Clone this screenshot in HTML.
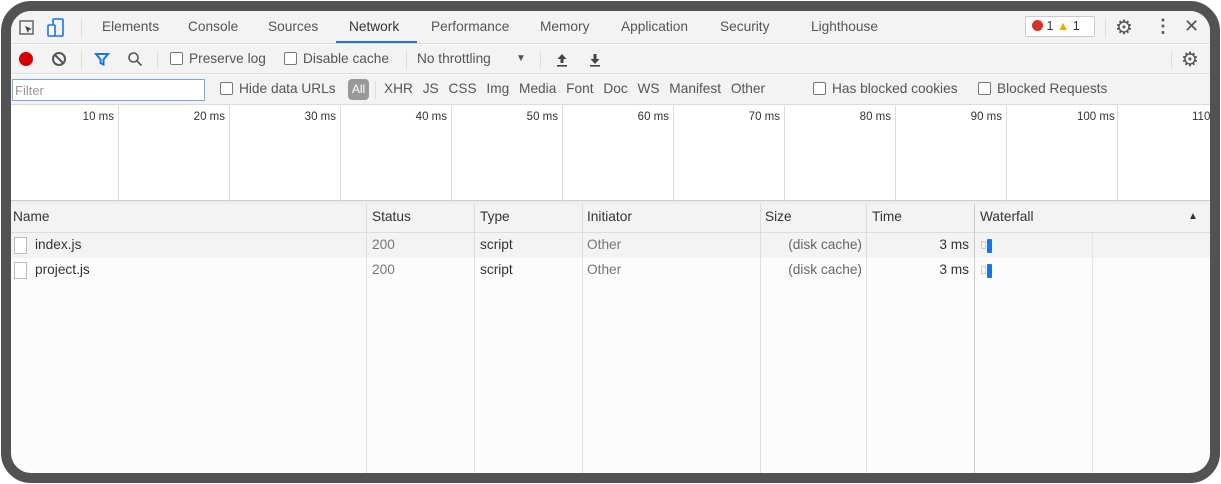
<!DOCTYPE html>
<html><head><style>
*{margin:0;padding:0;box-sizing:border-box}
body{width:1221px;height:484px;background:#fff;font-family:"Liberation Sans",Arial,sans-serif;font-size:13.7px;color:#333;position:relative;overflow:hidden}
#frame{position:absolute;left:1px;top:1px;width:1219px;height:482px;border:10px solid #525252;border-radius:30px;background:#fcfcfc;overflow:hidden}
.a{position:absolute;white-space:nowrap}
.g{color:#555}
.cb{display:inline-block;width:13px;height:13px;border:1px solid #777;border-radius:2px;background:#fff;vertical-align:-2px;margin-right:6px}
.vl{position:absolute;width:1px;background:#ddd}
.r{text-align:right;width:100px}
</style></head><body>
<div id="frame">
<div class="a" style="left:0;top:0;width:1199px;height:33px;background:#f3f3f3;border-bottom:1px solid #ddd"></div>
<svg class="a" style="left:8px;top:9px" width="16" height="16"><rect x="1" y="1" width="13" height="13" fill="none" stroke="#666" stroke-width="1.5"/><path d="M6 6l7 3-3 1-1 3z" fill="#444"/></svg>
<svg class="a" style="left:36px;top:7px" width="18" height="20"><rect x="6" y="1" width="10" height="17" rx="1" fill="none" stroke="#1a73e8" stroke-width="1.6"/><rect x="1" y="7" width="7" height="11" rx="1" fill="#fff" stroke="#1a73e8" stroke-width="1.6"/></svg>
<div class="vl" style="left:70px;top:8px;height:18px"></div>
<div class="a g" style="left:91px;top:8px">Elements</div>
<div class="a g" style="left:177px;top:8px">Console</div>
<div class="a g" style="left:257px;top:8px">Sources</div>
<div class="a" style="left:338px;top:8px;color:#333">Network</div>
<div class="a" style="left:325px;top:30px;width:81px;height:2px;background:#1a73e8"></div>
<div class="a g" style="left:420px;top:8px">Performance</div>
<div class="a g" style="left:529px;top:8px">Memory</div>
<div class="a g" style="left:610px;top:8px">Application</div>
<div class="a g" style="left:709px;top:8px">Security</div>
<div class="a g" style="left:800px;top:8px">Lighthouse</div>
<div class="a" style="left:1014px;top:5px;width:70px;height:21px;border:1px solid #ccc;border-radius:2px;background:#fff;font-size:12.5px;padding:2px 0 0 6px"><span style="display:inline-block;width:11px;height:11px;border-radius:50%;background:#d93025;vertical-align:-1px"></span> 1 <span style="color:#f2a600">▲</span> 1</div>
<div class="vl" style="left:1094px;top:8px;height:18px"></div>
<div class="a" style="left:1104px;top:4px;font-size:20px;color:#555">⚙</div>
<div class="a" style="left:1143px;top:5px;font-size:18px;color:#555;font-weight:bold">⋮</div>
<div class="a" style="left:1173px;top:5px;font-size:18px;color:#555">✕</div>
<div class="a" style="left:0;top:34px;width:1199px;height:29px;background:#f3f3f3;border-bottom:1px solid #ddd"></div>
<div class="a" style="left:8px;top:41px;width:14px;height:14px;border-radius:50%;background:#d50000"></div>
<svg class="a" style="left:40px;top:40px" width="16" height="16"><circle cx="8" cy="8" r="6" fill="none" stroke="#555" stroke-width="2"/><path d="M4 4l8 8" stroke="#555" stroke-width="2"/></svg>
<div class="vl" style="left:70px;top:40px;height:18px"></div>
<svg class="a" style="left:83px;top:40px" width="16" height="16"><path d="M2 3h12l-4.5 5.5v5l-3-1.5v-3.5z" fill="none" stroke="#1a73e8" stroke-width="2"/></svg>
<svg class="a" style="left:116px;top:40px" width="16" height="16"><circle cx="6.5" cy="6.5" r="4.5" fill="none" stroke="#555" stroke-width="1.6"/><path d="M10 10l4.5 4.5" stroke="#555" stroke-width="1.6"/></svg>
<div class="vl" style="left:146px;top:40px;height:18px"></div>
<div class="a g" style="left:159px;top:40px"><span class="cb"></span>Preserve log</div>
<div class="a g" style="left:273px;top:40px"><span class="cb"></span>Disable cache</div>
<div class="vl" style="left:395px;top:40px;height:18px"></div>
<div class="a g" style="left:406px;top:40px">No throttling</div>
<div class="a g" style="left:505px;top:42px;font-size:10px">▼</div>
<div class="vl" style="left:529px;top:40px;height:18px"></div>
<svg class="a" style="left:544px;top:41px" width="14" height="16"><path d="M7 2l-4.5 5h3v4h3v-4h3z" fill="#444"/><rect x="2" y="13" width="10" height="1.6" fill="#444"/></svg>
<svg class="a" style="left:577px;top:41px" width="14" height="16"><path d="M7 12l-4.5-5h3v-5h3v5h3z" fill="#444"/><rect x="2" y="13" width="10" height="1.6" fill="#444"/></svg>
<div class="vl" style="left:1160px;top:40px;height:18px"></div>
<div class="a" style="left:1170px;top:36px;font-size:20px;color:#555">⚙</div>
<div class="a" style="left:0;top:64px;width:1199px;height:30px;background:#f3f3f3;border-bottom:1px solid #ddd"></div>
<div class="a" style="left:1px;top:68px;width:193px;height:22px;border:1px solid #7aa7e8;background:#fff;color:#999;padding:3px 2px;font-size:13px">Filter</div>
<div class="a g" style="left:209px;top:70px"><span class="cb"></span>Hide data URLs</div>
<div class="a" style="left:337px;top:68px;width:21px;height:21px;border-radius:4px;background:#999;color:#fff;font-size:12px;text-align:center;line-height:21px">All</div>
<div class="vl" style="left:364px;top:70px;height:18px"></div>
<div class="a g" style="left:373px;top:70px;word-spacing:6px">XHR JS CSS Img Media Font Doc WS Manifest Other</div>
<div class="a g" style="left:802px;top:70px"><span class="cb"></span>Has blocked cookies</div>
<div class="a g" style="left:967px;top:70px"><span class="cb"></span>Blocked Requests</div>
<div class="a" style="left:0;top:95px;width:1199px;height:95px;background:#fff;border-bottom:1px solid #ccc"></div>
<div class="a" style="left:0;top:190px;width:1199px;height:3px;background:#eee"></div>
<div id="grid"></div>
<div class="a" style="left:0;top:193px;width:1199px;height:29px;background:#f3f3f3;border-bottom:1px solid #ddd"></div>
<div class="a" style="left:0;top:222px;width:1199px;height:25px;background:#f3f3f3"></div>
<div class="a" style="left:2px;top:198px">Name</div>
<div class="a" style="left:361px;top:198px">Status</div>
<div class="a" style="left:469px;top:198px">Type</div>
<div class="a" style="left:576px;top:198px">Initiator</div>
<div class="a" style="left:754px;top:198px">Size</div>
<div class="a" style="left:861px;top:198px">Time</div>
<div class="a" style="left:969px;top:198px">Waterfall</div>
<div class="a" style="left:1177px;top:200px;font-size:10px">▲</div>
<div class="a" style="left:3px;top:226px;width:13px;height:17px;border:1px solid #bbb;background:#fff"></div>
<div class="a" style="left:24px;top:226px">index.js</div>
<div class="a" style="left:3px;top:251px;width:13px;height:17px;border:1px solid #bbb;background:#fff"></div>
<div class="a" style="left:24px;top:251px">project.js</div>
<div class="a" style="left:361px;top:226px;color:#777">200</div><div class="a" style="left:361px;top:251px;color:#777">200</div>
<div class="a" style="left:469px;top:226px">script</div><div class="a" style="left:469px;top:251px">script</div>
<div class="a" style="left:576px;top:226px;color:#777">Other</div><div class="a" style="left:576px;top:251px;color:#777">Other</div>
<div class="a r" style="left:751px;top:226px;color:#666">(disk cache)</div><div class="a r" style="left:751px;top:251px;color:#666">(disk cache)</div>
<div class="a r" style="left:858px;top:226px">3 ms</div><div class="a r" style="left:858px;top:251px">3 ms</div>
<div class="a" style="left:970px;top:230px;width:5px;height:8px;border:1px solid #ccc"></div><div class="a" style="left:976px;top:228px;width:5px;height:14px;background:#1a73e8;border-radius:1px"></div>
<div class="a" style="left:970px;top:255px;width:5px;height:8px;border:1px solid #ccc"></div><div class="a" style="left:976px;top:253px;width:5px;height:14px;background:#1a73e8;border-radius:1px"></div>
<div class="vl" style="left:355px;top:193px;height:280px"></div>
<div class="vl" style="left:463px;top:193px;height:280px"></div>
<div class="vl" style="left:571px;top:193px;height:280px"></div>
<div class="vl" style="left:749px;top:193px;height:280px"></div>
<div class="vl" style="left:855px;top:193px;height:280px"></div>
<div class="vl" style="left:963px;top:193px;height:280px;background:#ccc"></div>
<div class="vl" style="left:1081px;top:222px;height:250px;background:#e6e6e6"></div>
</div>
<script>
var g=document.getElementById('grid'),h='';
for(var i=1;i<=10;i++){var x=107+111*(i-1);h+='<div class="vl" style="left:'+x+'px;top:95px;height:95px"></div><div class="a" style="left:'+(x-40)+'px;top:100px;width:36px;text-align:right;font-size:11.5px;color:#333">'+(i*10)+' ms</div>';}
h+='<div class="a" style="left:1181px;top:100px;font-size:11.5px">110</div>';
g.outerHTML=h;
</script>
</body></html>
